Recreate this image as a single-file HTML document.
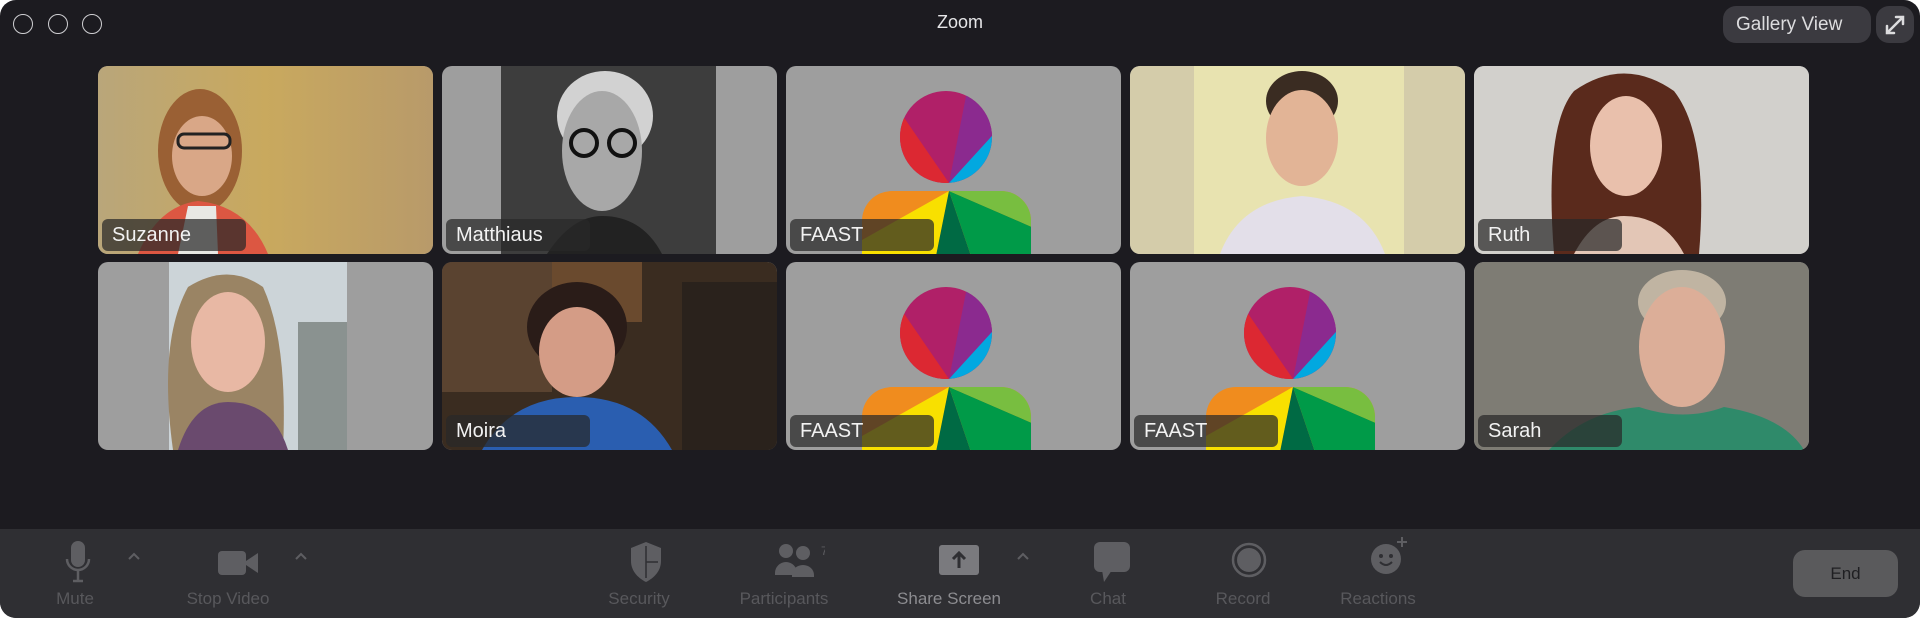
<!DOCTYPE html>
<html><head><meta charset="utf-8"><style>
*{margin:0;padding:0;box-sizing:border-box}
body{width:1920px;height:618px;background:#fff;overflow:hidden;font-family:"Liberation Sans",sans-serif}
#win{position:absolute;left:0;top:0;width:1920px;height:618px;background:#1c1b20;border-radius:16px;overflow:hidden}
.dot{position:absolute;top:14px;width:20px;height:20px;border:1.5px solid #cfcfd2;border-radius:50%}
#title{position:absolute;left:0;width:1920px;top:12px;text-align:center;color:#e6e6e8;font-size:18px}
#gv{position:absolute;left:1723px;top:6px;width:148px;height:37px;background:#3b3a40;border-radius:13px;color:#dcdcde;font-size:19px;line-height:37px;padding-left:13px}
#ex{position:absolute;left:1876px;top:6px;width:38px;height:37px;background:#3b3a40;border-radius:13px}
.tile{position:absolute;width:335px;height:188px;border-radius:10px;background:#9e9e9e;overflow:hidden}
.tile svg{position:absolute;left:0;top:0}
.lab{position:absolute;left:4px;top:153px;width:144px;height:32px;background:rgba(40,40,40,.72);border-radius:6px;color:#f2f2f2;font-size:20px;line-height:32px;padding-left:10px}
#tb{position:absolute;left:0;top:529px;width:1920px;height:89px;background:#2f2f33}
.l{position:absolute;top:60px;color:#58585c;font-size:17px;transform:translateX(-50%);white-space:nowrap}
.ic{position:absolute}
#end{position:absolute;left:1793px;top:21px;width:105px;height:47px;background:#5a5a5c;border-radius:12px;color:#1f1f22;font-size:17px;text-align:center;line-height:47px}
</style></head><body><div id="win">
<div class="dot" style="left:13px"></div><div class="dot" style="left:48px"></div><div class="dot" style="left:82px"></div>
<div id="title">Zoom</div>
<div id="gv">Gallery View</div>
<div id="ex"><svg width="38" height="37" viewBox="0 0 38 37"><g stroke="#dcdcde" stroke-width="2.5" fill="none" stroke-linecap="round"><path d="M11 27L27 11M20 11h7v7M11 20v7h7"/></g></svg></div>

<!-- Row 1 -->
<div class="tile" style="left:98px;top:66px"><svg width="335" height="188"><defs><linearGradient id="g1" x1="0" x2="1"><stop offset="0" stop-color="#b9a67a"/><stop offset=".5" stop-color="#c9a95e"/><stop offset="1" stop-color="#b89a6a"/></linearGradient></defs><rect width="335" height="188" fill="url(#g1)"/><ellipse cx="102" cy="85" rx="42" ry="62" fill="#9a6034"/><ellipse cx="104" cy="90" rx="30" ry="40" fill="#d9a787"/><rect x="80" y="68" width="52" height="14" rx="6" fill="none" stroke="#222" stroke-width="3"/><path d="M40 188 Q60 140 100 135 Q150 140 170 188Z" fill="#dc5742"/><path d="M80 188 L90 140 L118 140 L120 188Z" fill="#e8e8e4"/></svg><div class="lab">Suzanne</div></div>

<div class="tile" style="left:442px;top:66px"><svg width="335" height="188"><rect x="59" width="215" height="188" fill="#3d3d3d"/><ellipse cx="163" cy="50" rx="48" ry="45" fill="#d2d2d2"/><ellipse cx="160" cy="85" rx="40" ry="60" fill="#a8a8a8"/><circle cx="142" cy="77" r="13" fill="none" stroke="#111" stroke-width="4"/><circle cx="180" cy="77" r="13" fill="none" stroke="#111" stroke-width="4"/><path d="M105 188 Q130 150 160 150 Q200 150 220 188Z" fill="#222"/></svg><div class="lab">Matthiaus</div></div>

<div class="tile" style="left:786px;top:66px"><svg width="335" height="188"><defs><clipPath id="h"><circle cx="160" cy="71" r="46"/></clipPath><clipPath id="b"><path d="M76 188V155a30 30 0 0 1 30-30H215a30 30 0 0 1 30 30V188Z"/></clipPath></defs>
<g clip-path="url(#h)"><rect x="110" y="20" width="100" height="100" fill="#b02068"/><path d="M163 117L110 40V120Z" fill="#dc2832"/><path d="M163 117L182 20H215V60Z" fill="#8b2a8f"/><path d="M163 117L215 60V120Z" fill="#02a8e0"/></g>
<g clip-path="url(#b)"><rect x="76" y="120" width="170" height="70" fill="#f08c1e"/><path d="M163 125L76 174V190H150Z" fill="#f8e000"/><path d="M163 125L150 190H185Z" fill="#006a44"/><path d="M163 125L185 190H246V161Z" fill="#009a48"/><path d="M163 125L246 161V120H170Z" fill="#78be40"/></g></svg><div class="lab">FAAST</div></div>

<div class="tile" style="left:1130px;top:66px"><svg width="335" height="188"><rect width="335" height="188" fill="#d4ccaa"/><rect x="64" width="210" height="188" fill="#e8e3b0"/><ellipse cx="172" cy="35" rx="36" ry="30" fill="#3a2c22"/><ellipse cx="172" cy="72" rx="36" ry="48" fill="#e2b496"/><path d="M90 188 Q110 135 172 130 Q235 135 255 188Z" fill="#e3dfe9"/></svg></div>

<div class="tile" style="left:1474px;top:66px"><svg width="335" height="188"><rect width="335" height="188" fill="#d2d0cc"/><path d="M80 188 Q70 60 100 25 Q150 -10 200 25 Q235 70 225 188Z" fill="#5a2a1c"/><ellipse cx="152" cy="80" rx="36" ry="50" fill="#e9c0ac"/><path d="M100 188 Q120 150 150 150 Q190 150 210 188Z" fill="#e3c6b6"/></svg><div class="lab">Ruth</div></div>

<!-- Row 2 -->
<div class="tile" style="left:98px;top:262px"><svg width="335" height="188"><rect x="71" width="178" height="188" fill="#ccd4d8"/><rect x="200" y="60" width="49" height="128" fill="#8a9290"/><path d="M75 188 Q60 80 90 25 Q130 0 165 25 Q190 80 185 188Z" fill="#9a8464"/><ellipse cx="130" cy="80" rx="37" ry="50" fill="#e8b8a4"/><path d="M80 188 Q95 140 130 140 Q175 140 190 188Z" fill="#6a4a6e"/></svg></div>

<div class="tile" style="left:442px;top:262px"><svg width="335" height="188"><rect width="335" height="188" fill="#3a2c20"/><rect x="0" y="0" width="110" height="130" fill="#5a4330"/><rect x="110" y="0" width="90" height="60" fill="#6a4a2e"/><rect x="240" y="20" width="95" height="168" fill="#2a221c"/><ellipse cx="135" cy="65" rx="50" ry="45" fill="#2a1c18"/><ellipse cx="135" cy="90" rx="38" ry="45" fill="#d49c86"/><path d="M40 188 Q70 135 135 135 Q200 135 230 188Z" fill="#2a5eb0"/></svg><div class="lab">Moira</div></div>

<div class="tile" style="left:786px;top:262px"><svg width="335" height="188"><defs><clipPath id="h2"><circle cx="160" cy="71" r="46"/></clipPath><clipPath id="b2"><path d="M76 188V155a30 30 0 0 1 30-30H215a30 30 0 0 1 30 30V188Z"/></clipPath></defs>
<g clip-path="url(#h2)"><rect x="110" y="20" width="100" height="100" fill="#b02068"/><path d="M163 117L110 40V120Z" fill="#dc2832"/><path d="M163 117L182 20H215V60Z" fill="#8b2a8f"/><path d="M163 117L215 60V120Z" fill="#02a8e0"/></g>
<g clip-path="url(#b2)"><rect x="76" y="120" width="170" height="70" fill="#f08c1e"/><path d="M163 125L76 174V190H150Z" fill="#f8e000"/><path d="M163 125L150 190H185Z" fill="#006a44"/><path d="M163 125L185 190H246V161Z" fill="#009a48"/><path d="M163 125L246 161V120H170Z" fill="#78be40"/></g></svg><div class="lab">FAAST</div></div>

<div class="tile" style="left:1130px;top:262px"><svg width="335" height="188"><defs><clipPath id="h3"><circle cx="160" cy="71" r="46"/></clipPath><clipPath id="b3"><path d="M76 188V155a30 30 0 0 1 30-30H215a30 30 0 0 1 30 30V188Z"/></clipPath></defs>
<g clip-path="url(#h3)"><rect x="110" y="20" width="100" height="100" fill="#b02068"/><path d="M163 117L110 40V120Z" fill="#dc2832"/><path d="M163 117L182 20H215V60Z" fill="#8b2a8f"/><path d="M163 117L215 60V120Z" fill="#02a8e0"/></g>
<g clip-path="url(#b3)"><rect x="76" y="120" width="170" height="70" fill="#f08c1e"/><path d="M163 125L76 174V190H150Z" fill="#f8e000"/><path d="M163 125L150 190H185Z" fill="#006a44"/><path d="M163 125L185 190H246V161Z" fill="#009a48"/><path d="M163 125L246 161V120H170Z" fill="#78be40"/></g></svg><div class="lab">FAAST</div></div>

<div class="tile" style="left:1474px;top:262px"><svg width="335" height="188"><rect width="335" height="188" fill="#7e7c74"/><ellipse cx="208" cy="40" rx="44" ry="32" fill="#c0b4a2"/><ellipse cx="208" cy="85" rx="43" ry="60" fill="#dcae98"/><path d="M75 188 Q110 150 165 145 Q210 160 250 145 Q310 155 330 188Z" fill="#2f8a6a"/></svg><div class="lab">Sarah</div></div>

<!-- Toolbar -->
<div id="tb">
<svg class="ic" style="left:64px;top:12px" width="28" height="46"><rect x="7" y="0" width="14" height="26" rx="7" fill="#5e5e62"/><path d="M3 18a11 11 0 0 0 22 0M14 29v10M9 40h10" stroke="#5e5e62" stroke-width="2.5" fill="none"/></svg>
<svg class="ic" style="left:218px;top:20px" width="42" height="28"><rect x="0" y="2" width="28" height="24" rx="4" fill="#5e5e62"/><path d="M28 12L40 4V24L28 16Z" fill="#5e5e62"/></svg>
<svg class="ic" style="left:127px;top:22px" width="14" height="10"><path d="M2 8L7 3L12 8" stroke="#5e5e62" stroke-width="2" fill="none"/></svg>
<svg class="ic" style="left:294px;top:22px" width="14" height="10"><path d="M2 8L7 3L12 8" stroke="#5e5e62" stroke-width="2" fill="none"/></svg>
<svg class="ic" style="left:1016px;top:22px" width="14" height="10"><path d="M2 8L7 3L12 8" stroke="#5e5e62" stroke-width="2" fill="none"/></svg>
<svg class="ic" style="left:629px;top:12px" width="34" height="42"><path d="M17 1L32 7V20C32 30 25 37 17 41C9 37 2 30 2 20V7Z" fill="#5e5e62"/><path d="M17 5V21H29M17 21V37" stroke="#2f2f33" stroke-width="1.5" fill="none"/></svg>
<svg class="ic" style="left:775px;top:12px" width="50" height="40"><circle cx="11" cy="10" r="7" fill="#5e5e62"/><circle cx="28" cy="12" r="7" fill="#5e5e62"/><path d="M0 32a11 11 0 0 1 22 0v2H0Z M17 34a11 10 0 0 1 22 0v2H17Z" fill="#5e5e62"/><text x="46" y="14" font-size="12" fill="#5e5e62" font-family="Liberation Sans">7</text></svg>
<svg class="ic" style="left:939px;top:16px" width="40" height="32"><rect width="40" height="30" rx="3" fill="#7a7a7e"/><path d="M20 23V9M14 14L20 8L26 14" stroke="#2f2f33" stroke-width="3" fill="none"/></svg>
<svg class="ic" style="left:1094px;top:13px" width="36" height="40"><rect width="36" height="30" rx="6" fill="#5e5e62"/><path d="M8 28L10 40L18 28Z" fill="#5e5e62"/></svg>
<svg class="ic" style="left:1231px;top:13px" width="36" height="40"><circle cx="18" cy="18" r="16" fill="none" stroke="#5e5e62" stroke-width="2.5"/><circle cx="18" cy="18" r="12" fill="#5e5e62"/></svg>
<svg class="ic" style="left:1370px;top:8px" width="40" height="40"><circle cx="16" cy="22" r="15" fill="#5e5e62"/><circle cx="11" cy="19" r="2" fill="#2f2f33"/><circle cx="21" cy="19" r="2" fill="#2f2f33"/><path d="M10 25q6 6 12 0" stroke="#2f2f33" stroke-width="2" fill="none"/><path d="M32 0v10M27 5h10" stroke="#5e5e62" stroke-width="2"/></svg>
<div class="l" style="left:75px">Mute</div>
<div class="l" style="left:228px">Stop Video</div>
<div class="l" style="left:639px">Security</div>
<div class="l" style="left:784px">Participants</div>
<div class="l" style="left:949px;color:#8c8c90">Share Screen</div>
<div class="l" style="left:1108px">Chat</div>
<div class="l" style="left:1243px">Record</div>
<div class="l" style="left:1378px">Reactions</div>
<div id="end">End</div>
</div>
</div></body></html>
